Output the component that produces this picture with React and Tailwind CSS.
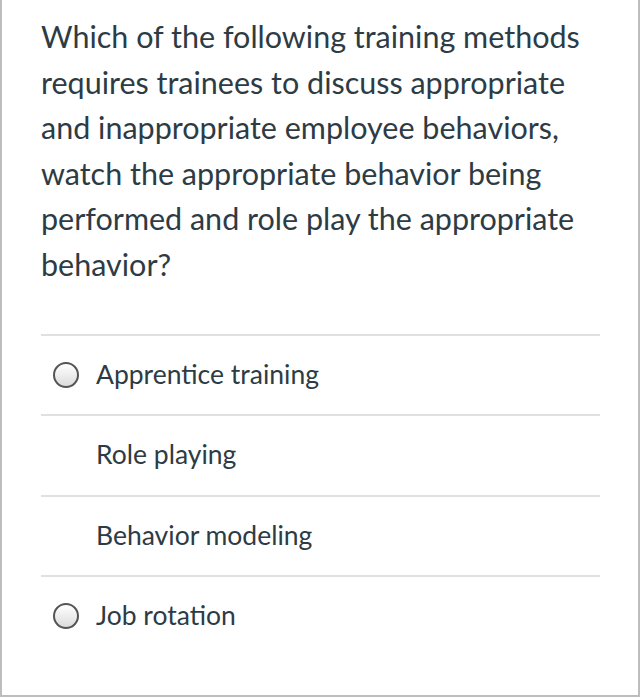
import React from "react";

const options = [
  { label: "Apprentice training", radio: true },
  { label: "Role playing", radio: false },
  { label: "Behavior modeling", radio: false },
  { label: "Job rotation", radio: true },
];

function Radio() {
  return (
    <span className="w-[26px] h-[26px] rounded-full border-2 border-[#555] bg-gradient-to-b from-white to-[#dcdcdc] shrink-0" />
  );
}

export default function App() {
  return (
    <div className="w-[640px] h-[697px] bg-white border-l-2 border-r-2 border-b-2 border-[#bdbdbd] font-['Lato',sans-serif] text-[#2d3b45]">
      <div className="pl-[39px] pr-[38px] pt-[14px]">
        <p className="text-[30.5px] leading-[45.6px]">
          Which of the following training methods requires trainees to discuss
          appropriate and inappropriate employee behaviors, watch the
          appropriate behavior being performed and role play the appropriate
          behavior?
        </p>
        <div className="mt-[46px]">
          {options.map((o) => (
            <div key={o.label} className="border-t-2 border-[#e0e0e0]">
              <div className="h-[78.5px] flex items-center pl-[12px] gap-[17px]">
                {o.radio ? <Radio /> : <span className="w-[26px] h-[26px] shrink-0" />}
                <span className="text-[26.5px]">{o.label}</span>
              </div>
            </div>
          ))}
        </div>
      </div>
    </div>
  );
}
